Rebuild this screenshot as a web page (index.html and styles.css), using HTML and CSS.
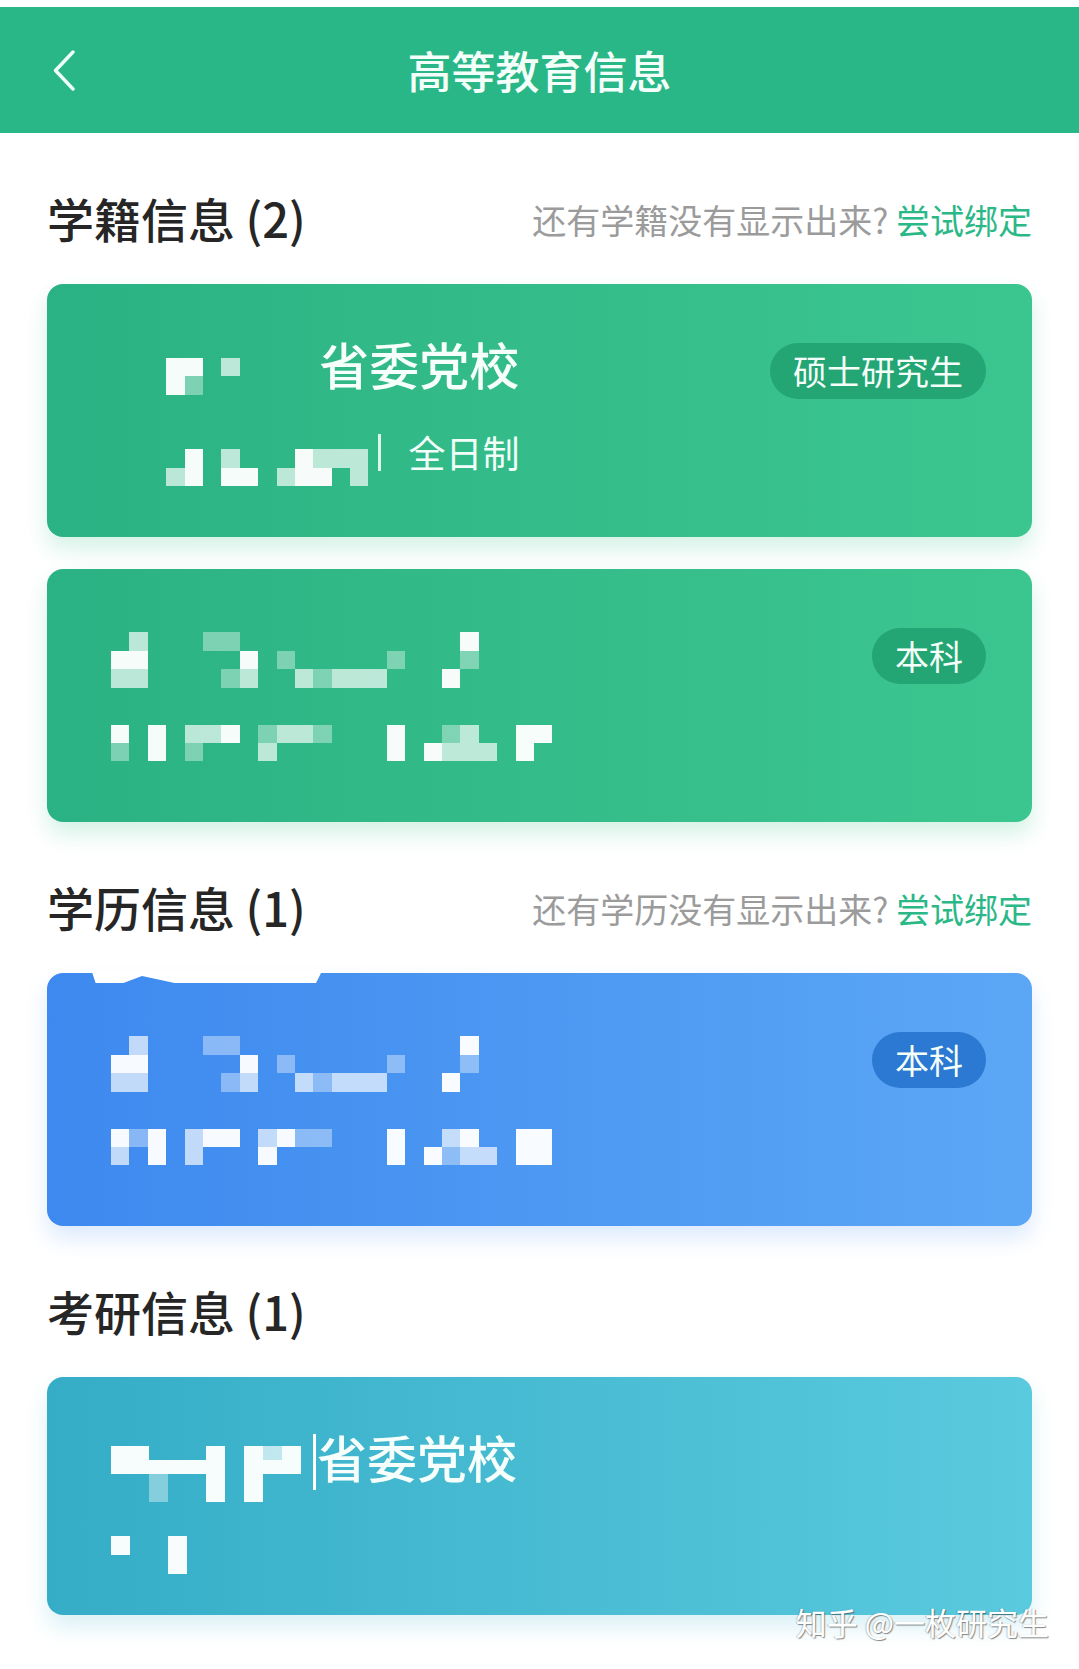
FILE: index.html
```html
<!DOCTYPE html>
<html>
	<head>
		<meta charset="UTF-8">
		<title>高等教育信息</title>
		<link rel="stylesheet" href="styles.css">
	</head>
	<body>
		<div id="page">
			<div class="topbar">
				<div class="back">
					<svg width="22" height="41" viewBox="0 0 22 41"><path d="M20 2 L2.5 20.5 L20 39" fill="none" stroke="#effff8" stroke-width="3.4" stroke-linecap="round" stroke-linejoin="round"/></svg>
				</div>
				<h1 class="title">高等教育信息</h1>
				<div></div>
			</div>

			<!-- 学籍 -->
			<div class="sec-head">
				<h2>学籍信息 (2)</h2>
				<p class="hint">还有学籍没有显示出来? <a>尝试绑定</a></p>
			</div>
			<div class="cards">
				<div class="card green">
					<div class="row">
						<div class="mosaic c11">
							<i></i><i></i><i></i><i></i><i></i><i></i><i></i><i></i><i></i><i></i><i></i>
							<i></i><i></i><i></i><i class="w"></i><i class="w"></i><i></i><i class="l"></i><i></i><i></i><i></i><i></i>
							<i></i><i></i><i></i><i class="w"></i><i class="m"></i><i></i><i></i><i></i><i></i><i></i><i></i>
						</div>
						<span class="name">省委党校</span>
						<span class="badge">硕士研究生</span>
					</div>
					<div class="row row2">
						<div class="mosaic c14 low">
							<i></i><i></i><i></i><i></i><i class="w"></i><i></i><i class="l"></i><i></i><i></i><i></i><i class="w"></i><i class="l"></i><i class="l"></i><i class="l"></i>
							<i></i><i></i><i></i><i class="l"></i><i class="w"></i><i></i><i class="w"></i><i class="w"></i><i></i><i class="l"></i><i class="w"></i><i class="w"></i><i></i><i class="l"></i>
						</div>
						<span class="sep"></span>
						<span class="sub">全日制</span>
					</div>
				</div>

				<div class="card green">
					<div class="row">
						<div class="mosaic c20">
							<i></i><i class="l"></i><i></i><i></i><i></i><i class="m"></i><i class="m"></i><i></i><i></i><i></i><i></i><i></i><i></i><i></i><i></i><i></i><i></i><i></i><i></i><i class="w"></i>
							<i class="w"></i><i class="w"></i><i></i><i></i><i></i><i></i><i></i><i class="w"></i><i></i><i class="m"></i><i></i><i></i><i></i><i></i><i></i><i class="m"></i><i></i><i></i><i></i><i class="m"></i>
							<i class="l"></i><i class="l"></i><i></i><i></i><i></i><i></i><i class="m"></i><i class="l"></i><i></i><i></i><i class="l"></i><i class="m"></i><i class="l"></i><i class="l"></i><i class="l"></i><i></i><i></i><i></i><i class="w"></i><i></i>
						</div>
						<span class="badge">本科</span>
					</div>
					<div class="row row2">
						<div class="mosaic c24">
							<i class="w"></i><i></i><i class="w"></i><i></i><i class="l"></i><i class="l"></i><i class="w"></i><i></i><i class="m"></i><i class="l"></i><i class="l"></i><i class="m"></i><i></i><i></i><i></i><i class="w"></i><i></i><i></i><i class="m"></i><i class="l"></i><i></i><i></i><i class="w"></i><i class="w"></i>
							<i class="m"></i><i></i><i class="w"></i><i></i><i class="m"></i><i></i><i></i><i></i><i class="l"></i><i></i><i></i><i></i><i></i><i></i><i></i><i class="w"></i><i></i><i class="w"></i><i class="l"></i><i class="l"></i><i class="l"></i><i></i><i class="w"></i><i></i>
						</div>
					</div>
				</div>
			</div>

			<!-- 学历 -->
			<div class="sec-head">
				<h2>学历信息 (1)</h2>
				<p class="hint">还有学历没有显示出来? <a>尝试绑定</a></p>
			</div>
			<div class="cards">
				<div class="card blue">
					<div class="row">
						<div class="mosaic c20">
							<i></i><i class="l"></i><i></i><i></i><i></i><i class="m"></i><i class="m"></i><i></i><i></i><i></i><i></i><i></i><i></i><i></i><i></i><i></i><i></i><i></i><i></i><i class="w"></i>
							<i class="w"></i><i class="w"></i><i></i><i></i><i></i><i></i><i></i><i class="w"></i><i></i><i class="m"></i><i></i><i></i><i></i><i></i><i></i><i class="m"></i><i></i><i></i><i></i><i class="m"></i>
							<i class="l"></i><i class="l"></i><i></i><i></i><i></i><i></i><i class="m"></i><i class="l"></i><i></i><i></i><i class="l"></i><i class="m"></i><i class="l"></i><i class="l"></i><i class="l"></i><i></i><i></i><i></i><i class="w"></i><i></i>
						</div>
						<span class="badge">本科</span>
					</div>
					<div class="row row2">
						<div class="mosaic c24">
							<i class="w"></i><i class="m"></i><i class="w"></i><i></i><i class="l"></i><i class="w"></i><i class="w"></i><i></i><i class="l"></i><i class="w"></i><i class="m"></i><i class="m"></i><i></i><i></i><i></i><i class="w"></i><i></i><i></i><i class="l"></i><i class="w"></i><i></i><i></i><i class="w"></i><i class="w"></i>
							<i class="l"></i><i></i><i class="w"></i><i></i><i class="l"></i><i></i><i></i><i></i><i class="w"></i><i></i><i></i><i></i><i></i><i></i><i></i><i class="w"></i><i></i><i class="w"></i><i class="m"></i><i class="l"></i><i class="l"></i><i></i><i class="w"></i><i class="w"></i>
						</div>
					</div>
				</div>
			</div>

			<!-- 考研 -->
			<div class="sec-head">
				<h2>考研信息 (1)</h2>
			</div>
			<div class="cards">
				<div class="card teal">
					<div class="row">
						<div class="mosaic c10 tall">
							<i class="w"></i><i class="w"></i><i></i><i></i><i></i><i class="w"></i><i></i><i class="w"></i><i class="l"></i><i class="w"></i>
							<i class="w"></i><i class="w"></i><i class="w"></i><i class="w"></i><i class="w"></i><i class="w"></i><i></i><i class="w"></i><i class="w"></i><i class="w"></i>
							<i></i><i></i><i class="m"></i><i></i><i></i><i class="w"></i><i></i><i class="w"></i><i></i><i></i>
							<i></i><i></i><i class="m"></i><i></i><i></i><i class="w"></i><i></i><i class="w"></i><i></i><i></i>
						</div>
						<span class="cut"></span>
						<span class="name">省委党校</span>
					</div>
					<div class="row row2">
						<div class="mosaic c4">
							<i class="w"></i><i></i><i></i><i class="w"></i>
							<i></i><i></i><i></i><i class="w"></i>
						</div>
					</div>
				</div>
			</div>

			<p class="mark">知乎 @一枚研究生</p>
		</div>
	</body>
</html>
```

FILE: styles.css
```css
html,body,h1,h2,p{
	margin: 0;
	padding: 0;
}
body{
	background: #fff;
	font-family: "Noto Sans CJK SC", "Noto Sans", sans-serif;
}
#page{
	position: relative;
	width: 1079px;
	min-height: 1669px;
	padding-top: 7px;
	box-sizing: border-box;
}
.topbar{
	display: grid;
	grid-template-columns: 1fr auto 1fr;
	align-items: center;
	height: 126px;
	background: #2ab787;
}
.back{
	padding-left: 53px;
	height: 41px;
}
.back svg{
	display: block;
}
.title{
	color: #f4fffa;
	font-size: 44px;
	font-weight: 500;
	line-height: 1;
}

.sec-head{
	display: flex;
	justify-content: space-between;
	align-items: center;
	height: 88px;
	margin-top: 43px;
	padding: 0 47px;
}
.sec-head h2{
	font-size: 47px;
	font-weight: 500;
	color: #262626;
	line-height: 1;
	margin-bottom: 6px;
}
.hint{
	font-size: 34px;
	color: #9b9b9b;
	line-height: 1;
}
.hint a{
	color: #2bb887;
}

.cards{
	display: flex;
	flex-direction: column;
	gap: 32px;
	margin-top: 20px;
	padding: 0 47px;
}
.card{
	position: relative;
	height: 253px;
	box-sizing: border-box;
	padding: 66px 46px 0 64px;
	border-radius: 16px;
	color: #fff;
}
.green{
	background: linear-gradient(90deg, #2bb284, #3cc68f);
	box-shadow: 0 12px 22px rgba(58, 198, 143, 0.22);
}
.blue{
	background: linear-gradient(90deg, #3d89ef, #5ca7f5);
	box-shadow: 0 12px 22px rgba(80, 150, 240, 0.2);
}
.blue::before{
	content: "";
	position: absolute;
	left: 44px;
	top: -4px;
	width: 232px;
	height: 14px;
	background: #fff;
	clip-path: polygon(0 0, 100% 0, 97% 100%, 36% 100%, 22% 50%, 14% 100%, 2% 100%);
}
.teal{
	height: 238px;
	background: linear-gradient(90deg, #35adc7, #5acade);
	box-shadow: 0 12px 22px rgba(80, 190, 215, 0.22);
}
.row{
	display: flex;
	align-items: center;
	height: 50px;
}
.row2{
	margin-top: 33px;
}
.name{
	margin: 0 0 24px 6px;
	font-size: 50px;
	font-weight: 500;
	line-height: 1;
	color: #f6fffb;
}
.cut{
	width: 3px;
	height: 56px;
	margin: 0 1px 12px 12px;
	background: #fff;
}
.teal .name{
	margin-left: 0;
}
.badge{
	margin: 0 0 8px auto;
	height: 56px;
	padding: 0 23px;
	border-radius: 28px;
	font-size: 34px;
	line-height: 56px;
	color: #f4fff9;
}
.green .badge{
	background: #24a574;
}
.blue .badge{
	background: #2c79d3;
}
.sep{
	width: 3px;
	height: 37px;
	margin: 0 27px 12px 10px;
	background: rgba(255, 255, 255, 0.85);
}
.sub{
	margin-bottom: 12px;
	font-size: 37px;
	line-height: 1;
	color: #f2fff9;
}

/* 打码 */
.mosaic{
	display: grid;
	grid-auto-rows: 18.4px;
}
.mosaic i{
	display: block;
}
.mosaic .w{
	background: rgba(255, 255, 255, 0.96);
}
.mosaic .l{
	background: rgba(255, 255, 255, 0.68);
}
.mosaic .m{
	background: rgba(255, 255, 255, 0.38);
}
.c4{ grid-template-columns: repeat(4, 19px); grid-auto-rows: 19px; }
.c10{ grid-template-columns: repeat(10, 19px); }
.c11{ grid-template-columns: repeat(11, 18.4px); margin-bottom: 16px; }
.c14{ grid-template-columns: repeat(14, 18.4px); }
.c20{ grid-template-columns: repeat(20, 18.4px); }
.c24{ grid-template-columns: repeat(24, 18.4px); }
.mosaic.tall{
	grid-auto-rows: 14px;
	margin-top: 12px;
}
.mosaic.low{
	align-self: flex-end;
	margin-bottom: -3px;
}
.c4{
	margin-top: 8px;
}

.mark{
	position: absolute;
	right: 30px;
	top: 1606px;
	font-size: 31px;
	line-height: 1;
	color: #fff;
	text-shadow: 1px 1px 1px rgba(60, 60, 60, 0.6), -1px 0 1px rgba(90, 90, 90, 0.3);
}
```
